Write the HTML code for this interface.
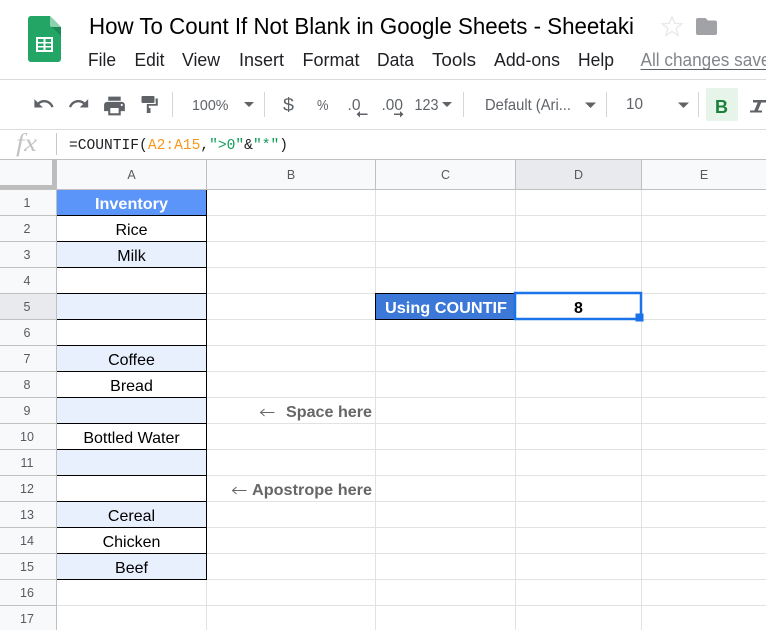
<!DOCTYPE html>
<html><head><meta charset="utf-8">
<style>
html,body{margin:0;padding:0;background:#fff;width:766px;height:630px;overflow:hidden}
svg{display:block;font-family:"Liberation Sans",sans-serif}
</style></head><body>
<svg xmlns="http://www.w3.org/2000/svg" width="766" height="630" viewBox="0 0 766 630">
<rect width="766" height="630" fill="#fff"/>
<!-- logo -->
<path d="M31 16H50L61 27V59a3 3 0 0 1-3 3H31a3 3 0 0 1-3-3V19a3 3 0 0 1 3-3z" fill="#23a566"/>
<path d="M50 16L61 27H52a2 2 0 0 1-2-2z" fill="#8ed1b1"/>
<path d="M52 27L61 36V27z" fill="#1c8a56"/>
<path d="M36 37H53V52H36zM38 39V42H43.500V39zM45.500 39V42H51V39zM38 43.500V46H43.500V43.500zM45.500 43.500V46H51V43.500zM38 47.500V50H43.500V47.500zM45.500 47.500V50H51V47.500z" fill="#fff" fill-rule="evenodd"/>
<!-- title -->
<text x="89" y="34" font-size="23" fill="#000" textLength="545" lengthAdjust="spacingAndGlyphs">How To Count If Not Blank in Google Sheets - Sheetaki</text>
<path d="M672 16.500l2.600 6.900 7.300.4-5.700 4.600 1.900 7.100-6.100-4-6.100 4 1.900-7.100-5.700-4.600 7.300-.4z" fill="none" stroke="#e8e8e8" stroke-width="1.300"/>
<path d="M698 18h7.500l2.500 2.500h7a2 2 0 0 1 2 2V33a2 2 0 0 1-2 2h-17a2 2 0 0 1-2-2V20a2 2 0 0 1 2-2z" fill="#a1a2a6"/>
<!-- menu -->
<g font-size="18" fill="#202124">
<text x="88" y="66" textLength="28" lengthAdjust="spacingAndGlyphs">File</text>
<text x="134.500" y="66" textLength="30" lengthAdjust="spacingAndGlyphs">Edit</text>
<text x="182" y="66" textLength="38" lengthAdjust="spacingAndGlyphs">View</text>
<text x="239" y="66" textLength="45" lengthAdjust="spacingAndGlyphs">Insert</text>
<text x="302.500" y="66" textLength="57" lengthAdjust="spacingAndGlyphs">Format</text>
<text x="377" y="66" textLength="37" lengthAdjust="spacingAndGlyphs">Data</text>
<text x="432" y="66" textLength="44" lengthAdjust="spacingAndGlyphs">Tools</text>
<text x="494" y="66" textLength="66" lengthAdjust="spacingAndGlyphs">Add-ons</text>
<text x="578" y="66" textLength="36" lengthAdjust="spacingAndGlyphs">Help</text>
</g>
<text x="640.500" y="66" font-size="18" fill="#80868b" textLength="130" lengthAdjust="spacingAndGlyphs">All changes save</text>
<rect x="640.500" y="69" width="126" height="1" fill="#5f6368"/>
<!-- top lines -->
<rect y="79" width="766" height="1" fill="#dadce0"/>
<rect y="129" width="766" height="1" fill="#dadce0"/>
<!-- toolbar icons -->
<g fill="#5f6368">
<path transform="translate(32.500,92.500) scale(.94)" d="M12.500 8c-2.650 0-5.050.99-6.900 2.600L2 7v9h9l-3.620-3.620c1.390-1.160 3.160-1.880 5.120-1.880 3.540 0 6.550 2.310 7.600 5.500l2.370-.78C21.080 11.030 17.150 8 12.500 8z"/>
<path transform="translate(67.500,92.500) scale(.94)" d="M18.400 10.600C16.550 8.990 14.150 8 11.500 8c-4.650 0-8.580 3.030-9.960 7.220L3.900 16c1.050-3.190 4.050-5.500 7.600-5.500 1.950 0 3.730.72 5.120 1.880L13 16h9V7l-3.600 3.600z"/>
<path transform="translate(102,93.500) scale(1.040)" d="M19 8H5c-1.660 0-3 1.340-3 3v6h4v4h12v-4h4v-6c0-1.660-1.340-3-3-3zm-3 11H8v-5h8v5zm3-7c-.55 0-1-.45-1-1s.45-1 1-1 1 .45 1 1-.45 1-1 1zm-1-9H6v4h12V3z"/>
<path d="M142.500 96h11a1 1 0 0 1 1 1v5a1 1 0 0 1-1 1h-11a1 1 0 0 1-1-1v-5a1 1 0 0 1 1-1zM155.500 98.500h2.300v7.300h-9V108h1.700v5h-3.700v-9h9z"/>
</g>
<!-- separators -->
<g fill="#d4d6d9">
<rect x="172" y="92" width="1" height="25"/>
<rect x="264" y="92" width="1" height="25"/>
<rect x="463" y="92" width="1" height="25"/>
<rect x="606" y="92" width="1" height="25"/>
<rect x="698" y="92" width="1" height="25"/>
</g>
<g font-size="15" fill="#5f6368">
<text x="192" y="110" textLength="36.500" lengthAdjust="spacingAndGlyphs">100%</text>
<text x="283" y="111" font-size="18" textLength="11" lengthAdjust="spacingAndGlyphs">$</text>
<text x="317" y="110" font-size="14.500" textLength="11.500" lengthAdjust="spacingAndGlyphs">%</text>
<text x="347.500" y="110" textLength="13" font-size="16" lengthAdjust="spacingAndGlyphs">.0</text>
<text x="381.500" y="110" textLength="21.500" font-size="16" lengthAdjust="spacingAndGlyphs">.00</text>
<text x="414.500" y="110" textLength="24" font-size="16" lengthAdjust="spacingAndGlyphs">123</text>
<text x="485" y="110" textLength="86" font-size="16" lengthAdjust="spacingAndGlyphs">Default (Ari...</text>
<text x="626" y="109" textLength="17" font-size="16" lengthAdjust="spacingAndGlyphs">10</text>
</g>
<g fill="#5f6368">
<path d="M244 102h10l-5 5z"/>
<path d="M442 102h10l-5 5z"/>
<path d="M585 102.500h11l-5.500 5.500z"/>
<path d="M678 102.500h11l-5.500 5.500z"/>
<path d="M360 113.500h7.500v1.500H360v2.500l-3.500-3.250 3.500-3.250z"/>
<path d="M394 113.500h6v-2.500l3.500 3.250-3.500 3.250V115h-6z"/>
</g>
<rect x="706" y="88" width="32" height="33" rx="2" fill="#e6f4ea"/>
<text x="715" y="113" font-size="18.500" font-weight="bold" fill="#188038" textLength="13" lengthAdjust="spacingAndGlyphs">B</text>
<path d="M753 100h13v2.500h-4.700l-3.400 8H762v2h-12v-2h4.300l3.400-8H753z" fill="#5f6368"/>
<!-- formula bar -->
<text x="16" y="151" font-family="Liberation Serif,serif" font-style="italic" font-size="25" fill="#c4c4c4" textLength="21" lengthAdjust="spacingAndGlyphs">fx</text>
<rect x="56" y="133" width="1" height="22" fill="#c8c8c8"/>
<text x="69" y="149" font-family="Liberation Mono,monospace" font-size="14.600" fill="#202124" xml:space="preserve">=COUNTIF(<tspan fill="#f7981d">A2:A15</tspan>,<tspan fill="#0f9d58">"&gt;0"</tspan>&amp;<tspan fill="#0f9d58">"*"</tspan>)</text>
<!-- grid header -->
<rect y="159" width="766" height="30" fill="#f8f9fa"/>
<rect x="515" y="159" width="126" height="30" fill="#e8eaed"/>
<rect y="159" width="766" height="1" fill="#c0c0c0"/>
<rect y="189" width="766" height="1" fill="#c0c0c0"/>
<rect x="0" y="190" width="56" height="440" fill="#f8f9fa"/>
<rect x="0" y="294" width="56" height="25" fill="#e8eaed"/>
<!-- horizontal grid lines -->
<g fill="#e2e2e2">
<rect x="0" y="215" width="766" height="1"/><rect x="0" y="241" width="766" height="1"/><rect x="0" y="267" width="766" height="1"/><rect x="0" y="293" width="766" height="1"/><rect x="0" y="319" width="766" height="1"/><rect x="0" y="345" width="766" height="1"/><rect x="0" y="371" width="766" height="1"/><rect x="0" y="397" width="766" height="1"/><rect x="0" y="423" width="766" height="1"/><rect x="0" y="449" width="766" height="1"/><rect x="0" y="475" width="766" height="1"/><rect x="0" y="501" width="766" height="1"/><rect x="0" y="527" width="766" height="1"/><rect x="0" y="553" width="766" height="1"/><rect x="0" y="579" width="766" height="1"/><rect x="0" y="605" width="766" height="1"/>
<rect x="206" y="190" width="1" height="440"/><rect x="375" y="190" width="1" height="440"/><rect x="515" y="190" width="1" height="440"/><rect x="641" y="190" width="1" height="440"/>
</g>
<g fill="#c0c0c0">
<rect x="0" y="215" width="56" height="1"/><rect x="0" y="241" width="56" height="1"/><rect x="0" y="267" width="56" height="1"/><rect x="0" y="293" width="56" height="1"/><rect x="0" y="319" width="56" height="1"/><rect x="0" y="345" width="56" height="1"/><rect x="0" y="371" width="56" height="1"/><rect x="0" y="397" width="56" height="1"/><rect x="0" y="423" width="56" height="1"/><rect x="0" y="449" width="56" height="1"/><rect x="0" y="475" width="56" height="1"/><rect x="0" y="501" width="56" height="1"/><rect x="0" y="527" width="56" height="1"/><rect x="0" y="553" width="56" height="1"/><rect x="0" y="579" width="56" height="1"/><rect x="0" y="605" width="56" height="1"/>
<rect x="56" y="159" width="1" height="471"/><rect x="206" y="159" width="1" height="31"/><rect x="375" y="159" width="1" height="31"/><rect x="515" y="159" width="1" height="31"/><rect x="641" y="159" width="1" height="31"/>
</g>
<rect x="52" y="159" width="4" height="30" fill="#bdbdbd"/>
<rect x="0" y="185" width="56" height="4" fill="#bdbdbd"/>
<!-- col labels -->
<g font-size="12.500" fill="#575b60" text-anchor="middle">
<text x="131.500" y="179">A</text><text x="291" y="179">B</text><text x="445.500" y="179">C</text><text x="578.500" y="179">D</text><text x="704" y="179">E</text>
<text x="27" y="207">1</text><text x="27" y="233">2</text><text x="27" y="259">3</text><text x="27" y="285">4</text><text x="27" y="311">5</text><text x="27" y="337">6</text><text x="27" y="363">7</text><text x="27" y="389">8</text><text x="27" y="415">9</text><text x="27" y="441">10</text><text x="27" y="467">11</text><text x="27" y="493">12</text><text x="27" y="519">13</text><text x="27" y="545">14</text><text x="27" y="571">15</text><text x="27" y="597">16</text><text x="27" y="623">17</text>
</g>
<!-- column A -->
<rect x="57" y="190" width="149" height="25" fill="#5b95f9"/>
<g fill="#e8f0fe">
<rect x="57" y="242" width="149" height="25"/>
<rect x="57" y="294" width="149" height="25"/>
<rect x="57" y="346" width="149" height="25"/>
<rect x="57" y="398" width="149" height="25"/>
<rect x="57" y="450" width="149" height="25"/>
<rect x="57" y="502" width="149" height="25"/>
<rect x="57" y="554" width="149" height="25"/>
</g>
<g fill="#000">
<rect x="57" y="215" width="150" height="1"/><rect x="57" y="241" width="150" height="1"/><rect x="57" y="267" width="150" height="1"/><rect x="57" y="293" width="150" height="1"/><rect x="57" y="319" width="150" height="1"/><rect x="57" y="345" width="150" height="1"/><rect x="57" y="371" width="150" height="1"/><rect x="57" y="397" width="150" height="1"/><rect x="57" y="423" width="150" height="1"/><rect x="57" y="449" width="150" height="1"/><rect x="57" y="475" width="150" height="1"/><rect x="57" y="501" width="150" height="1"/><rect x="57" y="527" width="150" height="1"/><rect x="57" y="553" width="150" height="1"/><rect x="57" y="579" width="150" height="1"/>
<rect x="206" y="190" width="1" height="390"/>
</g>
<text x="95" y="209" font-size="16" font-weight="bold" fill="#fff" textLength="73" lengthAdjust="spacingAndGlyphs">Inventory</text>
<g font-size="16" fill="#000" text-anchor="middle">
<text x="131.500" y="235">Rice</text>
<text x="131.500" y="261">Milk</text>
<text x="131.500" y="365">Coffee</text>
<text x="131.500" y="391">Bread</text>
<text x="131.500" y="443">Bottled Water</text>
<text x="131.500" y="521">Cereal</text>
<text x="131.500" y="547">Chicken</text>
<text x="131.500" y="573">Beef</text>
</g>
<!-- notes -->
<text x="286" y="417" font-size="16" font-weight="bold" fill="#666" textLength="86" lengthAdjust="spacingAndGlyphs">Space here</text>
<text x="252" y="495" font-size="16" font-weight="bold" fill="#666" textLength="120" lengthAdjust="spacingAndGlyphs">Apostrope here</text>
<g fill="none" stroke="#666" stroke-width="1">
<path d="M260.500 412.500h14M264.500 409l-4 3.500 4 3.500"/>
<path d="M232.500 490.500h14M236.500 487l-4 3.500 4 3.500"/>
</g>
<!-- COUNTIF -->
<rect x="375.500" y="293.500" width="140" height="26" fill="#3c78d8" stroke="#000"/>
<text x="385" y="313" font-size="16" font-weight="bold" fill="#fff" textLength="122" lengthAdjust="spacingAndGlyphs">Using COUNTIF</text>
<text x="578.500" y="313" font-size="16" font-weight="bold" fill="#000" text-anchor="middle">8</text>
<rect x="515" y="293" width="126" height="26" fill="none" stroke="#1a73e8" stroke-width="2.500"/>
<rect x="635.500" y="313.500" width="8" height="8" fill="#1a73e8"/>
</svg>
</body></html>
